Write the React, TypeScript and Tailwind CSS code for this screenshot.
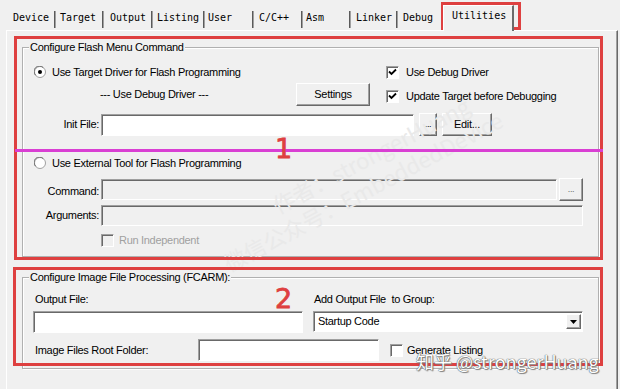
import type { ReactNode } from 'react';

const sunken =
  'border border-t-[#a0a0a0] border-l-[#a0a0a0] border-r-white border-b-white shadow-[inset_1px_1px_0_#696969]';
const raised =
  'border border-t-white border-l-white border-r-[#696969] border-b-[#696969] shadow-[inset_-1px_-1px_0_#a0a0a0] bg-[#f0f0f0]';
const etched = 'border border-[#b0b0b0] shadow-[inset_1px_1px_0_#fff,1px_1px_0_#fff]';

const tabs = [
  { label: 'Device', w: 'w-[48px]', pl: 'pl-[5px]' },
  { label: 'Target', w: 'w-[48px]', pl: 'pl-[4px]' },
  { label: 'Output', w: 'w-[49px]', pl: 'pl-[6px]' },
  { label: 'Listing', w: 'w-[52px]', pl: 'pl-[4px]' },
  { label: 'User', w: 'w-[49px]', pl: 'pl-[3px]' },
  { label: 'C/C++', w: 'w-[49px]', pl: 'pl-[5px]' },
  { label: 'Asm', w: 'w-[48px]', pl: 'pl-[3px]' },
  { label: 'Linker', w: 'w-[47px]', pl: 'pl-[5px]' },
  { label: 'Debug', w: 'w-[44px]', pl: 'pl-[5px]', last: true },
];

function Radio({ checked }: { checked?: boolean }) {
  return (
    <svg width="12" height="12" viewBox="0 0 12 12" className="shrink-0">
      <circle cx="6" cy="6" r="5.5" fill="#fff" stroke="#a0a0a0" />
      <path d="M1.6 9.2 A5 5 0 0 1 9.2 1.6" fill="none" stroke="#696969" />
      {checked && <circle cx="6" cy="6" r="2" fill="#000" />}
    </svg>
  );
}

function Check({ checked, disabled }: { checked?: boolean; disabled?: boolean }) {
  return (
    <span
      className={`flex h-[13px] w-[13px] shrink-0 items-center justify-center ${sunken} ${
        disabled ? 'bg-[#f0f0f0]' : 'bg-white'
      }`}
    >
      {checked && (
        <svg width="9" height="9" viewBox="0 0 9 9">
          <path d="M1 3.5 L3.5 6 L8 1.5" fill="none" stroke="#000" strokeWidth="1.8" />
        </svg>
      )}
    </span>
  );
}

function Btn({ className, children }: { className: string; children: ReactNode }) {
  return <div className={`flex items-center justify-center ${raised} ${className}`}>{children}</div>;
}

function Group({ title, className, children }: { title: string; className: string; children: ReactNode }) {
  return (
    <div className={`ml-[15px] w-[577px] ${etched} ${className}`}>
      <div className="-mt-[8px] ml-[6px] w-fit bg-[#f0f0f0] px-px leading-[14px]">{title}</div>
      {children}
    </div>
  );
}

export default function App() {
  return (
    <div className="relative h-[389px] w-[620px] overflow-hidden bg-[#f0f0f0] font-['Liberation_Sans',Arial,sans-serif] text-[11px] tracking-[-0.3px] text-black">
      {/* tab strip */}
      <div className="flex h-[30px] items-end pl-[8px] font-['DejaVu_Sans_Mono',monospace] text-[10px] tracking-normal">
        {tabs.map(t => (
          <div key={t.label} className={`flex h-[22px] items-start ${t.w}`}>
            <span className={`pt-[4px] leading-[12px] ${t.pl}`}>{t.label}</span>
            {!t.last && (
              <span className="ml-auto mt-[3px] h-[17px] w-[2px] border-l border-[#5a5a5a] bg-[#a0a0a0]" />
            )}
          </div>
        ))}
        <div className="relative z-10 -mb-px ml-px flex h-[26px] w-[71px] items-start border-l border-t border-r-2 border-l-white border-t-white border-r-[#6a6a6a] bg-[#f0f0f0]">
          <span className="pl-[8px] pt-[4px] leading-[12px]">Utilities</span>
        </div>
      </div>

      {/* panel */}
      <div className="ml-[6px] h-[359px] w-[612px] border-l border-r border-t border-l-white border-r-[#696969] border-t-white shadow-[inset_-1px_0_0_#a0a0a0]">
        <Group title="Configure Flash Menu Command" className="mt-[16px] h-[210px]">
          <div className="mt-[8px] flex h-[20px] items-center">
            <div className="flex w-[363px] items-center pl-[11px]">
              <Radio checked />
              <span className="ml-[6px]">Use Target Driver for Flash Programming</span>
            </div>
            <Check checked />
            <span className="ml-[7px]">Use Debug Driver</span>
          </div>

          <div className="mt-px flex h-[23px] items-center">
            <span className="w-[273px] pl-[77px]">--- Use Debug Driver ---</span>
            <Btn className="h-[23px] w-[74px]">Settings</Btn>
            <div className="ml-[16px] mt-[7px] flex h-[13px] items-center self-start">
              <Check checked />
              <span className="ml-[7px]">Update Target before Debugging</span>
            </div>
          </div>

          <div className="mt-[7px] flex h-[23px] items-center">
            <span className="w-[76px] text-right">Init File:</span>
            <div className={`ml-[2px] h-[22px] w-[313px] bg-white ${sunken}`} />
            <Btn className="ml-[5px] h-[23px] w-[18px] text-[9px]">...</Btn>
            <Btn className="ml-[5px] h-[23px] w-[50px]">Edit...</Btn>
          </div>

          <div className="mt-[17px] flex h-[20px] items-center pl-[11px]">
            <Radio />
            <span className="ml-[6px]">Use External Tool for Flash Programming</span>
          </div>

          <div className="mt-[5px] flex h-[23px] items-center">
            <span className="w-[76px] pt-[3px] text-right">Command:</span>
            <div className={`ml-[2px] h-[21px] w-[456px] ${sunken}`} />
            <Btn className="ml-[2px] h-[23px] w-[24px] text-[9px] text-[#6d6d6d]">...</Btn>
          </div>

          <div className="mt-[4px] flex h-[21px] items-center">
            <span className="w-[76px] text-right">Arguments:</span>
            <div className={`ml-[2px] h-[21px] w-[482px] ${sunken}`} />
          </div>

          <div className="mt-[8px] flex h-[13px] items-center pl-[78px]">
            <Check disabled />
            <span className="ml-[5px] text-[#a0a0a0]">Run Independent</span>
          </div>
        </Group>

        <Group title="Configure Image File Processing (FCARM):" className="mt-[20px] h-[92px]">
          <div className="mt-[8px] flex h-[14px] items-center">
            <span className="w-[290px] pl-[12px]">Output File:</span>
            <span className="pl-px">Add Output File&nbsp; to Group:</span>
          </div>
          <div className="mt-[5px] flex items-start">
            <div className={`ml-[10px] h-[22px] w-[270px] bg-white ${sunken}`} />
            <div className={`ml-[10px] flex h-[21px] w-[270px] items-center bg-white pl-[4px] ${sunken}`}>
              <span className="flex-1">Startup Code</span>
              <Btn className="mr-[1px] h-[15px] w-[15px]">
                <svg width="7" height="4" viewBox="0 0 7 4">
                  <path d="M0 0 H7 L3.5 4 Z" fill="#000" />
                </svg>
              </Btn>
            </div>
          </div>
          <div className="mt-[6px] flex h-[22px] items-center">
            <span className="w-[175px] pl-[12px]">Image Files Root Folder:</span>
            <div className={`h-[22px] w-[181px] bg-white ${sunken}`} />
            <div className="ml-[11px]">
              <Check />
            </div>
            <span className="ml-[4px]">Generate Listing</span>
          </div>
        </Group>
      </div>

      {/* faint diagonal watermark */}
      <div className="pointer-events-none absolute left-[200px] top-[150px] -rotate-[28deg] font-['Noto_Sans_CJK_SC',sans-serif] text-[22px] leading-[28px] tracking-normal text-[#e9e9e9]">
        <div className="pl-[70px]">作者：strongerHuang</div>
        <div>微信公众号：EmbeddedDevice</div>
      </div>

      {/* annotations */}
      <div className="pointer-events-none absolute left-[441px] top-[2px] h-[28px] w-[80px] border-[3px] border-[#de4040]" />
      <div className="pointer-events-none absolute left-[14px] top-[36px] h-[224px] w-[589px] border-[3px] border-[#de4040]" />
      <div className="pointer-events-none absolute left-[15px] top-[149px] h-[3px] w-[588px] bg-[#d93fd3]" />
      <div className="pointer-events-none absolute left-[13px] top-[267px] h-[99px] w-[590px] border-[3px] border-[#de4040]" />
      <div className="pointer-events-none absolute left-[275px] top-[133px] font-['DejaVu_Sans',sans-serif] text-[27px] leading-[32px] tracking-normal text-[#de4040] [-webkit-text-stroke:0.8px_#de4040]">
        1
      </div>
      <div className="pointer-events-none absolute left-[275px] top-[283px] font-['DejaVu_Sans',sans-serif] text-[27px] leading-[32px] tracking-normal text-[#de4040] [-webkit-text-stroke:0.8px_#de4040]">
        2
      </div>
      <div className="pointer-events-none absolute left-[416px] top-[349px] font-['Noto_Sans_CJK_SC',sans-serif] text-[18px] leading-[24px] tracking-normal text-white [text-shadow:0_0_1px_#555,0_0_1px_#555,1px_1px_1px_#888]">
        知乎 @strongerHuang
      </div>
    </div>
  );
}
